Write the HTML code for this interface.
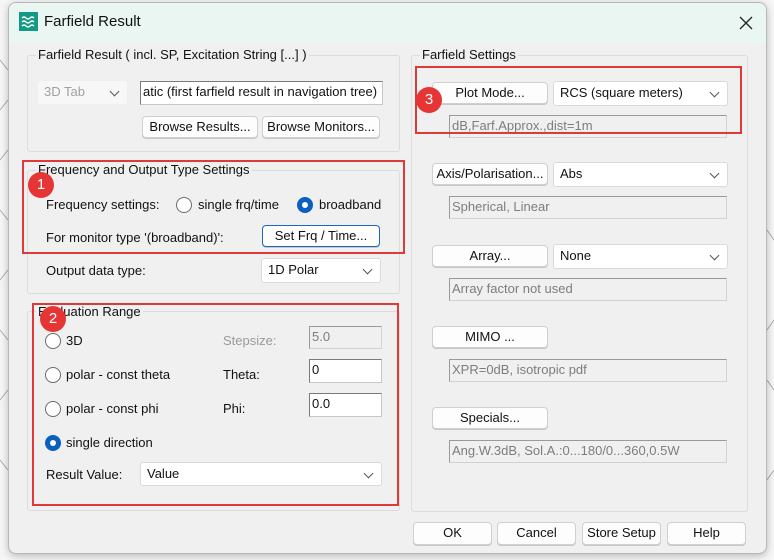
<!DOCTYPE html>
<html><head><meta charset="utf-8"><style>
*{box-sizing:border-box;margin:0;padding:0}
body{width:774px;height:560px;overflow:hidden;background:#f6f6f6;font-family:"Liberation Sans",Arial,sans-serif;font-size:13px;color:#111;position:relative}
.a{position:absolute}
.dlg{position:absolute;left:8px;top:2px;width:759px;height:552px;background:#f0f0f0;border:1px solid #b8b8b8;border-radius:8px;box-shadow:0 2px 8px rgba(0,0,0,.25);overflow:hidden}
.title{position:absolute;left:0;top:0;width:100%;height:40px;background:#e9f6f2}
.grp{position:absolute;border:1px solid #dcdcdc;border-radius:3px}
.lbl{position:absolute;background:#f0f0f0;padding:0 2px;line-height:14px;white-space:nowrap}
.t{position:absolute;white-space:nowrap;line-height:16px}
.btn{position:absolute;background:#fdfdfd;border:1px solid #d0d0d0;border-radius:4px;text-align:center;line-height:20px;white-space:nowrap;box-shadow:0 1px 0 #c8c8c8}
.cb{position:absolute;background:#fff;border:1px solid #dadada;border-radius:3px;line-height:22px;padding-left:6px;white-space:nowrap;overflow:hidden}
.cb:after{content:"";position:absolute;right:9px;top:7px;width:6px;height:6px;border-right:1.2px solid #555;border-bottom:1.2px solid #555;transform:rotate(45deg)}
.ed{position:absolute;background:#fff;border:1px solid #c8c8c8;border-top-color:#7a7a7a;border-left-color:#7a7a7a;line-height:20px;padding-left:2px;white-space:nowrap;overflow:hidden}
.ro{position:absolute;background:#f0f0f0;border:1px solid #d2d2d2;border-top-color:#9a9a9a;border-left-color:#9a9a9a;line-height:20px;padding-left:2px;color:#7d7d7d;white-space:nowrap;overflow:hidden}
.rd{position:absolute;width:16px;height:16px;border-radius:50%;border:1px solid #6a6a6a;background:#fff}
.rd.on{border:none;background:#0a60c0}
.rd.on:after{content:"";position:absolute;left:5px;top:5px;width:6px;height:6px;border-radius:50%;background:#fff}
.red{position:absolute;border:2px solid #e0393a}
.bd{position:absolute;width:26px;height:26px;border-radius:50%;background:#e53535;color:#fff;text-align:center;line-height:26px;font-size:15px}
</style></head><body>
<svg class="a" style="left:0;top:0" width="774" height="560"><g stroke="#aaa" stroke-width="1" fill="none">
<path d="M0 60 L8 70 M0 110 L8 100 M0 160 L8 150 M0 210 L8 220 M0 280 L8 270 M0 330 L8 340 M0 400 L8 390 M0 460 L8 470 M767 330 L774 320 M767 380 L774 390 M767 480 L774 470 M767 230 L774 240"/></g></svg>
<div class="dlg">
<div class="title"></div>
<svg class="a" style="left:10px;top:9px" width="19" height="19"><rect width="19" height="19" fill="#139a86"/><g stroke="#fff" stroke-width="1.3" fill="none"><path d="M3 6 q2 -2 4 0 t4 0 t4 0"/><path d="M3 10 q2 -2 4 0 t4 0 t4 0"/><path d="M3 14 q2 -2 4 0 t4 0 t4 0"/></g></svg>
<div class="t" style="left:35px;top:11px;font-size:15px">Farfield Result</div>
<svg class="a" style="left:730px;top:13px" width="14" height="14"><path d="M1 1L13 13M13 1L1 13" stroke="#222" stroke-width="1.3"/></svg>
</div>

<div class="grp" style="left:27px;top:55px;width:373px;height:97px"></div>
<div class="lbl" style="left:36px;top:48px">Farfield Result ( incl. SP, Excitation String [...] )</div>
<div class="cb" style="left:37px;top:80px;width:91px;height:25px;color:#a0a0a0;border-color:#eee;background:#f7f7f7">3D Tab</div>
<div class="ed" style="left:140px;top:81px;width:243px;height:24px">atic (first farfield result in navigation tree)</div>
<div class="btn" style="left:142px;top:116px;width:116px;height:22px">Browse Results...</div>
<div class="btn" style="left:262px;top:116px;width:118px;height:22px">Browse Monitors...</div>

<div class="grp" style="left:27px;top:170px;width:373px;height:124px"></div>
<div class="lbl" style="left:36px;top:163px">Frequency and Output Type Settings</div>
<div class="t" style="left:46px;top:197px">Frequency settings:</div>
<div class="rd" style="left:176px;top:197px"></div><div class="t" style="left:198px;top:197px">single frq/time</div>
<div class="rd on" style="left:297px;top:197px"></div><div class="t" style="left:319px;top:197px">broadband</div>
<div class="t" style="left:46px;top:230px">For monitor type '(broadband)':</div>
<div class="btn" style="left:262px;top:225px;width:118px;height:22px;border:1px solid #1a68c0">Set Frq / Time...</div>
<div class="t" style="left:46px;top:263px">Output data type:</div>
<div class="cb" style="left:261px;top:258px;width:120px;height:25px">1D Polar</div>
<div class="red" style="left:22px;top:160px;width:383px;height:94px"></div>
<div class="bd" style="left:28px;top:172px">1</div>

<div class="grp" style="left:27px;top:311px;width:373px;height:200px"></div>
<div class="lbl" style="left:36px;top:305px">Evaluation Range</div>
<div class="rd" style="left:45px;top:333px"></div><div class="t" style="left:66px;top:333px">3D</div>
<div class="t" style="left:223px;top:333px;color:#9a9a9a">Stepsize:</div>
<div class="ro" style="left:309px;top:326px;width:73px;height:23px">5.0</div>
<div class="rd" style="left:45px;top:367px"></div><div class="t" style="left:66px;top:367px">polar - const theta</div>
<div class="t" style="left:223px;top:367px">Theta:</div>
<div class="ed" style="left:309px;top:359px;width:73px;height:24px">0</div>
<div class="rd" style="left:45px;top:401px"></div><div class="t" style="left:66px;top:401px">polar - const phi</div>
<div class="t" style="left:223px;top:401px">Phi:</div>
<div class="ed" style="left:309px;top:393px;width:73px;height:24px">0.0</div>
<div class="rd on" style="left:45px;top:435px"></div><div class="t" style="left:66px;top:435px">single direction</div>
<div class="t" style="left:46px;top:467px">Result Value:</div>
<div class="cb" style="left:140px;top:462px;width:242px;height:24px">Value</div>
<div class="red" style="left:32px;top:303px;width:367px;height:203px"></div>
<div class="bd" style="left:40px;top:306px">2</div>

<div class="grp" style="left:411px;top:55px;width:337px;height:457px"></div>
<div class="lbl" style="left:420px;top:48px">Farfield Settings</div>
<div class="btn" style="left:432px;top:82px;width:116px;height:22px">Plot Mode...</div>
<div class="cb" style="left:553px;top:81px;width:175px;height:25px">RCS (square meters)</div>
<div class="ro" style="left:449px;top:115px;width:278px;height:23px">dB,Farf.Approx.,dist=1m</div>
<div class="btn" style="left:432px;top:163px;width:116px;height:22px">Axis/Polarisation...</div>
<div class="cb" style="left:553px;top:162px;width:175px;height:25px">Abs</div>
<div class="ro" style="left:449px;top:196px;width:278px;height:23px">Spherical, Linear</div>
<div class="btn" style="left:432px;top:245px;width:116px;height:22px">Array...</div>
<div class="cb" style="left:553px;top:244px;width:175px;height:25px">None</div>
<div class="ro" style="left:449px;top:278px;width:278px;height:23px">Array factor not used</div>
<div class="btn" style="left:432px;top:326px;width:116px;height:22px">MIMO ...</div>
<div class="ro" style="left:449px;top:359px;width:278px;height:23px">XPR=0dB, isotropic pdf</div>
<div class="btn" style="left:432px;top:407px;width:116px;height:22px">Specials...</div>
<div class="ro" style="left:449px;top:440px;width:278px;height:23px">Ang.W.3dB, Sol.A.:0...180/0...360,0.5W</div>
<div class="red" style="left:415px;top:66px;width:327px;height:68px"></div>
<div class="bd" style="left:416px;top:87px">3</div>

<div class="btn" style="left:413px;top:522px;width:79px;height:23px">OK</div>
<div class="btn" style="left:497px;top:522px;width:79px;height:23px">Cancel</div>
<div class="btn" style="left:582px;top:522px;width:79px;height:23px">Store Setup</div>
<div class="btn" style="left:667px;top:522px;width:79px;height:23px">Help</div>
</body></html>
